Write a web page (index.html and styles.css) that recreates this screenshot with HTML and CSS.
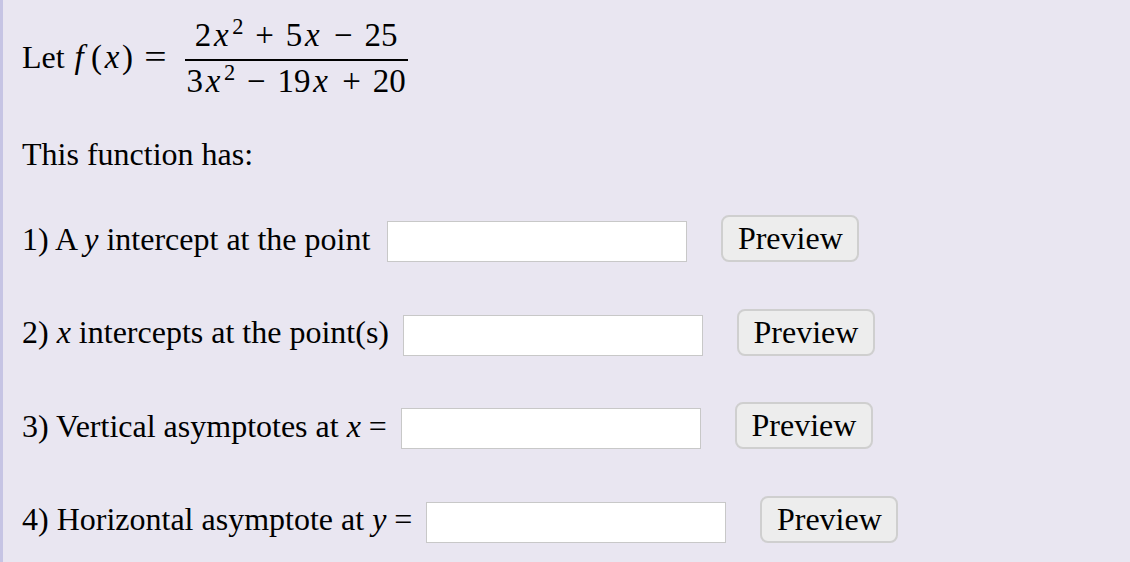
FILE: index.html
```html
<!DOCTYPE html>
<html lang="en">
  <head>
    <meta charset="UTF-8" />
    <title>Rational function</title>
    <link rel="stylesheet" href="styles.css">
  </head>
  <body>
    <div class="problem">
      <div class="def">
        <span class="txt">Let</span>
        <span class="txt expr fx"><i class="f">f</i>(<i>x</i>)</span>
        <span class="txt expr eq">=</span>
        <span class="frac">
          <span class="num expr">2<i>x</i><sup>2</sup><span class="op">+</span>5<i>x</i><span class="op">&minus;</span>25</span>
          <span class="bar"></span>
          <span class="den expr">3<i>x</i><sup>2</sup><span class="op">&minus;</span>19<i>x</i><span class="op">+</span>20</span>
        </span>
      </div>

      <p class="lead">This function has:</p>

      <div class="rows">
        <div class="row">
          <span class="label">1) A <i>y</i> intercept at the point</span>
          <input class="answer first" type="text">
          <button class="preview">Preview</button>
        </div>
        <div class="row">
          <span class="label">2) <i>x</i> intercepts at the point(s)</span>
          <input class="answer" type="text">
          <button class="preview">Preview</button>
        </div>
        <div class="row">
          <span class="label">3) Vertical asymptotes at <i>x</i> =</span>
          <input class="answer" type="text">
          <button class="preview">Preview</button>
        </div>
        <div class="row">
          <span class="label">4) Horizontal asymptote at <i>y</i> =</span>
          <input class="answer" type="text">
          <button class="preview">Preview</button>
        </div>
      </div>
    </div>
  </body>
</html>
```

FILE: styles.css
```css
html, body {
  margin: 0;
  height: 100%;
}

body {
  background-color: #e9e6f1;
  font-family: "Liberation Serif", "Times New Roman", serif;
  font-size: 32px;
  color: #000;
}

.problem {
  min-height: 100%;
  box-sizing: border-box;
  border-left: 3px solid #c6c4e4;
  padding-left: 19px;
}

.def {
  display: flex;
  align-items: flex-start;
  padding-top: 19px;
}

.txt {
  line-height: 32px;
  margin-top: 22px;
}

.expr {
  font-family: "Liberation Serif", serif;
  font-size: 33px;
}

.expr i {
  font-style: italic;
  padding: 0 0.08em;
}

.fx {
  margin-left: 8px;
  white-space: nowrap;
}

.fx i.f {
  padding: 0 0.22em 0 0.06em;
}

.eq {
  margin-left: 13px;
  margin-right: 20px;
  transform: scaleX(1.2);
}

.frac {
  display: flex;
  flex-direction: column;
  align-items: center;
}

.num, .den {
  line-height: 32px;
  white-space: nowrap;
  padding: 0 2px;
}

.num {
  padding-bottom: 8px;
}

.den {
  padding-top: 4px;
}

.bar {
  align-self: stretch;
  height: 2px;
  background-color: #000;
}

.expr sup {
  font-size: 0.68em;
  line-height: 0;
  vertical-align: 0.55em;
  padding-left: 1px;
}

.op {
  padding: 0 0.36em;
}

.lead {
  margin: 41px 0 0;
  line-height: 32px;
}

.rows {
  display: flex;
  flex-direction: column;
  gap: 46.5px;
  margin-top: 45px;
}

.row {
  display: flex;
  align-items: center;
}

.label {
  line-height: 32px;
  white-space: nowrap;
}

.answer {
  box-sizing: border-box;
  width: 300px;
  height: 41px;
  margin: 6px 0 0 14px;
  border: 1px solid #c8c8c8;
  background-color: #fff;
  padding: 0 6px;
  font: inherit;
}

.answer.first {
  margin-left: 17px;
}

.preview {
  box-sizing: border-box;
  width: 138px;
  height: 47px;
  margin-left: 34px;
  border: 2px solid #cfcfcf;
  border-radius: 8px;
  background-color: #ededed;
  font-family: "Liberation Serif", "Times New Roman", serif;
  font-size: 32px;
  color: #000;
  padding: 0;
}
```
